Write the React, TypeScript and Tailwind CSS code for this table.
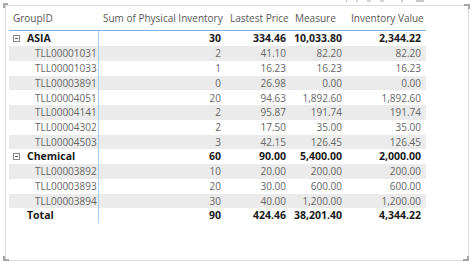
import React from "react";

type Row = {
  kind: "group" | "item" | "total";
  name: string;
  qty: string;
  price: string;
  measure: string;
  value: string;
};

const rows: Row[] = [
  { kind: "group", name: "ASIA", qty: "30", price: "334.46", measure: "10,033.80", value: "2,344.22" },
  { kind: "item", name: "TLL00001031", qty: "2", price: "41.10", measure: "82.20", value: "82.20" },
  { kind: "item", name: "TLL00001033", qty: "1", price: "16.23", measure: "16.23", value: "16.23" },
  { kind: "item", name: "TLL00003891", qty: "0", price: "26.98", measure: "0.00", value: "0.00" },
  { kind: "item", name: "TLL00004051", qty: "20", price: "94.63", measure: "1,892.60", value: "1,892.60" },
  { kind: "item", name: "TLL00004141", qty: "2", price: "95.87", measure: "191.74", value: "191.74" },
  { kind: "item", name: "TLL00004302", qty: "2", price: "17.50", measure: "35.00", value: "35.00" },
  { kind: "item", name: "TLL00004503", qty: "3", price: "42.15", measure: "126.45", value: "126.45" },
  { kind: "group", name: "Chemical", qty: "60", price: "90.00", measure: "5,400.00", value: "2,000.00" },
  { kind: "item", name: "TLL00003892", qty: "10", price: "20.00", measure: "200.00", value: "200.00" },
  { kind: "item", name: "TLL00003893", qty: "20", price: "30.00", measure: "600.00", value: "600.00" },
  { kind: "item", name: "TLL00003894", qty: "30", price: "40.00", measure: "1,200.00", value: "1,200.00" },
  { kind: "total", name: "Total", qty: "90", price: "424.46", measure: "38,201.40", value: "4,344.22" },
];

const headers = ["GroupID", "Sum of Physical Inventory", "Lastest Price", "Measure", "Inventory Value"];

const cols = "grid grid-cols-[90px_127px_65px_56px_79px]";

const MinusBox = () => (
  <span className="mr-[7px] ml-[4px] flex h-[7px] w-[7px] shrink-0 items-center justify-center border border-[#8a8a8a]">
    <span className="h-px w-[3px] bg-[#555]" />
  </span>
);

const App = () => {
  return (
    <div
      className="relative h-[264px] w-[474px] overflow-hidden bg-white text-[10px]"
      style={{ fontFamily: '"Open Sans", "Noto Sans", sans-serif' }}
    >
      {/* visual header toolbar, mostly cut off above the frame */}
      <div className="absolute left-[346px] top-0 flex h-[2px] items-start gap-[9px]">
        <span className="h-[2px] w-px bg-[#c8c8c8]" />
        <span className="h-[2px] w-[2px] bg-[#d0d0d0]" />
        <span className="h-[2px] w-[4px] bg-[#d6d6d6]" />
        <span className="h-[2px] w-[4px] bg-[#d6d6d6]" />
        <span className="ml-[8px] h-[2px] w-[2px] bg-[#cfcfcf]" />
        <span className="ml-[4px] h-[2px] w-[8px] bg-[#c8c8c8]" />
      </div>

      {/* corner handles */}
      <div className="absolute left-[3px] top-[3px] h-[5px] w-[5px] border-l-2 border-t-2 border-[#a6a6a6]" />
      <div className="absolute left-[464px] top-[4px] h-[5px] w-[6px] border-r-2 border-t-2 border-[#a6a6a6]" />
      <div className="absolute left-[3px] top-[256px] h-[5px] w-[6px] border-b-2 border-l-2 border-[#a6a6a6]" />
      <div className="absolute left-[463px] top-[256px] h-[5px] w-[6px] border-b-2 border-r-2 border-[#a6a6a6]" />

      <div className="ml-[5px] mt-[5px] h-[256px] w-[464px] border border-[#dcdcdc] pl-[3px]">
        <div className={`${cols} h-[25px] w-[417px] items-center border-b border-[#7fb3e4] text-[#5a5856]`}>
          {headers.map((h) => (
            <div key={h} className="whitespace-nowrap pl-[4px]">
              {h}
            </div>
          ))}
        </div>

        {rows.map((r, idx) => {
          const bold = r.kind !== "item";
          const shade = idx % 2 === 1 ? "bg-[#ebebeb]" : "bg-white";
          const h = idx === 0 ? "h-[15px]" : "h-[14.75px]";
          const txt = bold ? "font-bold text-[10.5px] text-[#1a1a1a]" : "text-[#666666]";
          return (
            <div key={r.name} className={`${cols} ${h} ${shade} ${txt} w-[417px] items-center leading-none`}>
              <div className="flex h-full items-center border-r border-[#a8cdf0]">
                {r.kind === "group" && <MinusBox />}
                {r.kind === "total" && <span className="w-[18px] shrink-0" />}
                {r.kind === "item" && <span className="w-[26px] shrink-0" />}
                <span>{r.name}</span>
              </div>
              <div className="pr-[5px] text-right">{r.qty}</div>
              <div className="pr-[5px] text-right">{r.price}</div>
              <div className="pr-[5px] text-right">{r.measure}</div>
              <div className="pr-[5px] text-right">{r.value}</div>
            </div>
          );
        })}
      </div>
    </div>
  );
};

export default App;
